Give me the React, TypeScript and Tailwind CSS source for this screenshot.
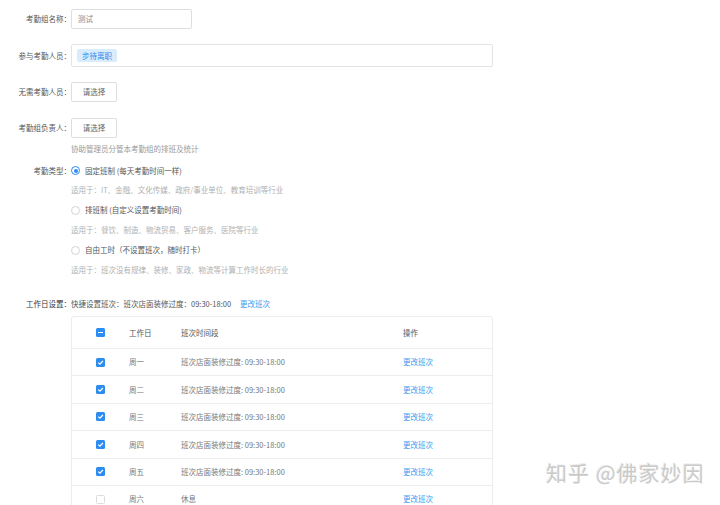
import React from "react";

const Check = ({ state }: { state: "on" | "off" | "mixed" }) => {
  if (state === "off")
    return <span className="block w-[9px] h-[9px] rounded-[1.5px] border border-[#dcdcdc] bg-white" />;
  return (
    <span className="flex items-center justify-center w-[9px] h-[9px] rounded-[1.5px] bg-[#2d8cf0]">
      {state === "on" ? (
        <svg width="9" height="9" viewBox="0 0 9 9">
          <path d="M2.2 4.6 L3.9 6.2 L6.9 3" fill="none" stroke="#fff" strokeWidth="1.2" />
        </svg>
      ) : (
        <span className="block w-[5px] h-[1.5px] bg-white" />
      )}
    </span>
  );
};

const Radio = ({ on }: { on?: boolean }) => (
  <span
    className={
      "flex items-center justify-center w-[9px] h-[9px] rounded-full border bg-white " +
      (on ? "border-[#2d8cf0]" : "border-[#d4d4d4]")
    }
  >
    {on && <span className="block w-[4px] h-[4px] rounded-full bg-[#2d8cf0]" />}
  </span>
);

const Label = ({ children, dark }: { children: React.ReactNode; dark?: boolean }) => (
  <div className={"w-[71px] shrink-0 text-right " + (dark ? "text-[#333]" : "text-[#555]")}>{children}</div>
);

const days = [
  { d: "周一", on: true },
  { d: "周二", on: true },
  { d: "周三", on: true },
  { d: "周四", on: true },
  { d: "周五", on: true },
  { d: "周六", on: false },
];

export default function App() {
  return (
    <div className="relative w-[720px] h-[505px] overflow-hidden bg-white pt-[9px] font-['Noto_Sans_CJK_SC',sans-serif] text-[7.5px] leading-none text-[#666]">
      <div className="flex items-center h-[20px]">
        <Label>考勤组名称：</Label>
        <div className="flex items-center w-[121px] h-[20px] border border-[#dedede] rounded-[2px] pl-[6px] text-[#888]">测试</div>
      </div>

      <div className="mt-[15px] flex items-center h-[23px]">
        <Label>参与考勤人员：</Label>
        <div className="flex items-center w-[422px] h-[23px] border border-[#e3e3e3] rounded-[2px] pl-[5px]">
          <span className="flex items-center h-[13px] px-[5px] rounded-[2px] bg-[#d9ecfc] text-[#2d8cf0]">步待离职</span>
        </div>
      </div>

      <div className="mt-[15px] flex items-center h-[20px]">
        <Label>无需考勤人员：</Label>
        <div className="flex items-center justify-center w-[46px] h-[20px] border border-[#dedede] rounded-[2px] text-[#666]">请选择</div>
      </div>

      <div className="mt-[16px] flex items-center h-[20px]">
        <Label>考勤组负责人：</Label>
        <div className="flex items-center justify-center w-[46px] h-[20px] border border-[#dedede] rounded-[2px] text-[#666]">请选择</div>
      </div>

      <div className="mt-[5px] ml-[71px] h-[12px] flex items-center text-[#999]">协助管理员分管本考勤组的排班及统计</div>

      <div className="mt-[6px] flex items-center h-[19px]">
        <Label>考勤类型：</Label>
        <div className="flex items-center gap-[5px]">
          <Radio on />
          <span className="text-[#555]">固定班制 (每天考勤时间一样)</span>
        </div>
      </div>
      <div className="ml-[71px] h-[20px] flex items-center text-[#b0b0b0]">适用于：IT、金融、文化传媒、政府/事业单位、教育培训等行业</div>
      <div className="ml-[71px] h-[20px] flex items-center gap-[5px]">
        <Radio />
        <span className="text-[#555]">排班制 (自定义设置考勤时间)</span>
      </div>
      <div className="ml-[71px] h-[20px] flex items-center text-[#b0b0b0]">适用于：餐饮、制造、物流贸易、客户服务、医院等行业</div>
      <div className="ml-[71px] h-[20px] flex items-center gap-[5px]">
        <Radio />
        <span className="text-[#555]">自由工时（不设置班次，随时打卡）</span>
      </div>
      <div className="ml-[71px] h-[20px] flex items-center text-[#b0b0b0]">适用于：班次没有规律、装修、家政、物流等计算工作时长的行业</div>

      <div className="mt-[16px] flex items-center h-[16px]">
        <Label dark>工作日设置：</Label>
        <span className="text-[#555]">快捷设置班次：班次店面装修过度：09:30-18:00</span>
        <span className="ml-[9px] text-[#3a9af0]">更改班次</span>
      </div>

      <div className="mt-[4px] ml-[71px] w-[422px] border border-[#ececec] rounded-[3px] bg-white">
        <div className="flex items-center h-[31px] text-[#555]">
          <div className="w-[57px] pl-[24px]"><Check state="mixed" /></div>
          <div className="w-[52px]">工作日</div>
          <div className="w-[222px]">班次时间段</div>
          <div>操作</div>
        </div>
        {days.map((r) => (
          <div key={r.d} className="flex items-center h-[27.4px] border-t border-[#ececec] text-[#777]">
            <div className="w-[57px] pl-[24px]"><Check state={r.on ? "on" : "off"} /></div>
            <div className="w-[52px]">{r.d}</div>
            <div className="w-[222px]">{r.on ? "班次店面装修过度: 09:30-18:00" : "休息"}</div>
            <div className="text-[#3a9af0]">更改班次</div>
          </div>
        ))}
      </div>

      <div className="absolute left-[546px] top-[462px] text-[21px] leading-none tracking-[1px] text-[#cacaca] [text-shadow:1px_1px_0_#ffffff,-1px_-1px_0_#eeeeee] whitespace-nowrap">
        知乎 @佛家妙因
      </div>
    </div>
  );
}
